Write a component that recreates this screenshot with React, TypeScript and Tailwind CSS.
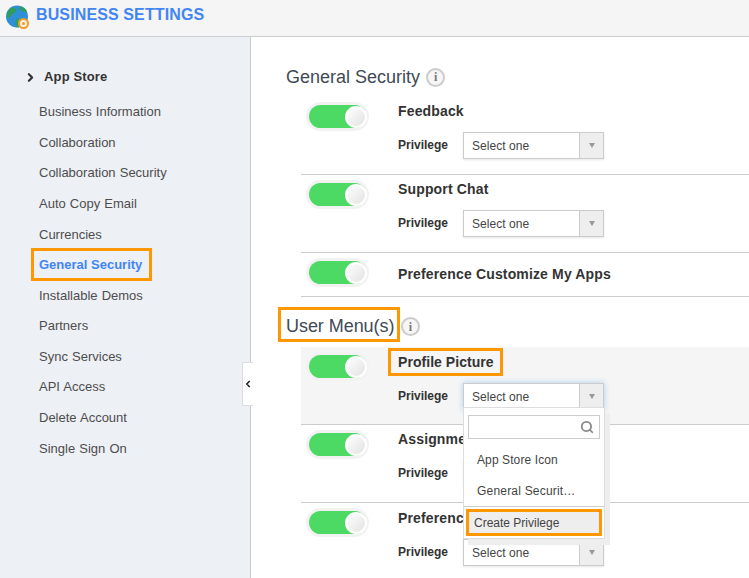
import React from "react";
import { ChevronRight, ChevronLeft, Search } from "lucide-react";

function Toggle() {
  return (
    <div className="w-[63px] h-[29px] rounded-full bg-[#f2f2f2] p-[3px] shrink-0">
      <div className="h-[23px] rounded-full bg-[#4cd964] flex justify-end items-center">
        <div className="w-[22px] h-[22px] -mr-[1px] rounded-full bg-[linear-gradient(135deg,#ffffff,#e2e2e2)] border-[2px] border-white" />
      </div>
    </div>
  );
}

function Select({ focus }: { focus?: boolean }) {
  return (
    <div
      className={
        "w-[141px] h-[27px] flex bg-white border border-[#cccccc] " +
        (focus ? "shadow-[0_0_6px_#a9cdf0]" : "shadow-[0_1px_2px_#e5e5e5]")
      }
    >
      <div className="flex-1 pl-[8px] text-[12px] leading-[26px] text-[#444444] tracking-[0.05px]">Select one</div>
      <div className="w-[24px] bg-[#eeeeee] border-l border-[#cccccc] flex items-center justify-center">
        <div className="w-0 h-0 border-l-[3.5px] border-r-[3.5px] border-t-[5px] border-l-transparent border-r-transparent border-t-[#999999]" />
      </div>
    </div>
  );
}

function Row({
  title,
  select = true,
  focus,
  highlight,
  boxed,
  border = true,
  height,
  titleTop,
}: {
  title: string;
  select?: boolean;
  focus?: boolean;
  highlight?: boolean;
  boxed?: boolean;
  border?: boolean;
  height: string;
  titleTop: string;
}) {
  return (
    <div
      className={
        "flex pl-[5px] " +
        height +
        (border ? " border-b border-[#cccccc]" : "") +
        (highlight ? " bg-[#f5f5f5]" : "")
      }
    >
      <div className="w-[92px] pt-[5px] shrink-0">
        <Toggle />
      </div>
      <div className={"flex-1 " + titleTop}>
        <div className="h-[20px] flex items-center">
          {boxed ? (
            <div className="border-[3px] border-[#ff9800] -ml-[10px] pl-[7px] pr-[6px] h-[28px] flex items-center text-[14px] font-bold text-[#333333] tracking-[0.05px] whitespace-nowrap">
              {title}
            </div>
          ) : (
            <div className="text-[14px] font-bold text-[#333333] tracking-[0.15px] whitespace-nowrap">{title}</div>
          )}
        </div>
        {select && (
          <div className="flex items-center mt-[11px]">
            <div className="w-[65px] pb-[2px] text-[12px] font-bold text-[#333333]">Privilege</div>
            <Select focus={focus} />
          </div>
        )}
      </div>
    </div>
  );
}

function Info() {
  return (
    <div className="w-[19px] h-[19px] rounded-full border-[2px] border-[#cccccc] bg-[#f6f6f6] flex items-center justify-center text-[12px] font-bold text-[#777777] font-['Liberation_Serif',serif]">
      i
    </div>
  );
}

const items = [
  "Business Information",
  "Collaboration",
  "Collaboration Security",
  "Auto Copy Email",
  "Currencies",
  "General Security",
  "Installable Demos",
  "Partners",
  "Sync Services",
  "API Access",
  "Delete Account",
  "Single Sign On",
];

export default function App() {
  return (
    <div className="w-[749px] h-[578px] overflow-hidden relative bg-white font-['Liberation_Sans',Arial,sans-serif] flex flex-col">
      <header className="h-[37px] shrink-0 bg-[#f5f5f5] border-b border-[#cccccc] flex items-start pl-[6px] pt-[5px]">
        <svg width="23" height="24" viewBox="0 0 23 24" className="shrink-0">
          <circle cx="11" cy="11.5" r="11" fill="#2e8fd6" />
          <path d="M4 3.5c3-2 5-1 6 1s-1 3-3 4-1 3-3 4-3-1-3-3 1-4 3-6zM14 1.5c3 0 6 2 7 5l-3 1-2-2-3-1zM10 15c2-2 5-2 7 0s1 5-1 6-4 2-5 1-2-5-1-7z" fill="#2f9d5d" />
          <circle cx="17.5" cy="18.5" r="4.5" fill="#f7f1e0" stroke="#f29a2e" strokeWidth="2" />
          <circle cx="17.5" cy="18.5" r="1.5" fill="#f29a2e" />
        </svg>
        <div className="ml-[7px] text-[16px] leading-[19px] font-bold text-[#4285f4] tracking-[0.12px]">BUSINESS SETTINGS</div>
      </header>
      <div className="flex-1 flex min-h-0">
        <aside className="w-[251px] shrink-0 bg-[#edf0f5] border-r border-[#cccccc] relative pt-[29px]">
          <div className="flex items-center h-[22px] pl-[24px]">
            <ChevronRight size={13} strokeWidth={4} className="text-[#333333]" />
            <span className="ml-[7px] text-[13px] font-bold text-[#333333] tracking-[0.15px]">App Store</span>
          </div>
          <div className="mt-[8.6px] flex flex-col">
            {items.map((t) =>
              t === "General Security" ? (
                <div key={t} className="h-[30.6px] flex items-center">
                  <div className="ml-[31px] -my-[2px] w-[121px] h-[33px] border-[3px] border-[#ff9800] pl-[5px] flex items-center text-[13px] font-bold text-[#4285f4] whitespace-nowrap">
                    {t}
                  </div>
                </div>
              ) : (
                <div key={t} className="h-[30.6px] flex items-center pl-[39px] text-[13px] text-[#4d4d4d] [word-spacing:0.5px]">
                  {t}
                </div>
              )
            )}
          </div>
          <div className="absolute left-[242px] top-[325px] w-[11px] h-[44px] bg-white border border-r-0 border-[#dddddd] flex items-center justify-center">
            <ChevronLeft size={12} strokeWidth={4} className="text-[#222222]" />
          </div>
        </aside>
        <main className="flex-1 min-w-0 pt-[28px] pl-[35px]">
          <div className="flex items-center h-[24px] text-[18px] text-[#3f4a56]">
            General Security
            <span className="ml-[6px]"><Info /></span>
          </div>
          <div className="ml-[15px] mt-[8px]">
            <Row title="Feedback" height="h-[78px]" titleTop="pt-[4px]" />
            <Row title="Support Chat" height="h-[78px]" titleTop="pt-[4px]" />
            <Row title="Preference Customize My Apps" select={false} height="h-[44px]" titleTop="pt-[11px]" />
          </div>
          <div className="flex items-start h-[35px] mt-[10px] -ml-[8px]">
            <div className="w-[122px] h-[35px] border-[3px] border-[#ff9800] pl-[5px] pt-[3px] flex items-center text-[18px] text-[#3f4a56] tracking-[-0.05px] whitespace-nowrap">
              User Menu(s)
            </div>
            <span className="ml-[1px] mt-[10px]"><Info /></span>
          </div>
          <div className="ml-[15px] mt-[5px]">
            <Row title="Profile Picture" focus highlight boxed height="h-[78px]" titleTop="pt-[5px]" />
            <Row title="Assignment" height="h-[78px]" titleTop="pt-[4px]" />
            <Row title="Preference" border={false} height="h-[75px]" titleTop="pt-[5px]" />
          </div>
        </main>
      </div>
      <div className="absolute left-[463px] top-[407px] w-[142px] h-[132px] bg-white border border-[#dddddd] shadow-[5px_6px_0_#eeeeee] flex flex-col">
        <div className="mx-[4px] mt-[7px] h-[24px] shrink-0 border border-[#cccccc] flex items-center justify-end pr-[5px]">
          <Search size={14} strokeWidth={3} className="text-[#888888]" />
        </div>
        <div className="pl-[13px] mt-[5px] h-[31px] flex items-center text-[12px] text-[#444444] tracking-[0.1px]">App Store Icon</div>
        <div className="pl-[13px] h-[31px] flex items-center text-[12px] text-[#444444] tracking-[0.2px]">General Securit…</div>
        <div className="border-t border-[#cccccc] pt-[2px]">
          <div className="mx-[2px] h-[27px] border-[3px] border-[#ff9800] bg-[#eeeeee] pl-[5px] flex items-center text-[12px] text-[#444444]">
            Create Privilege
          </div>
        </div>
      </div>
    </div>
  );
}
